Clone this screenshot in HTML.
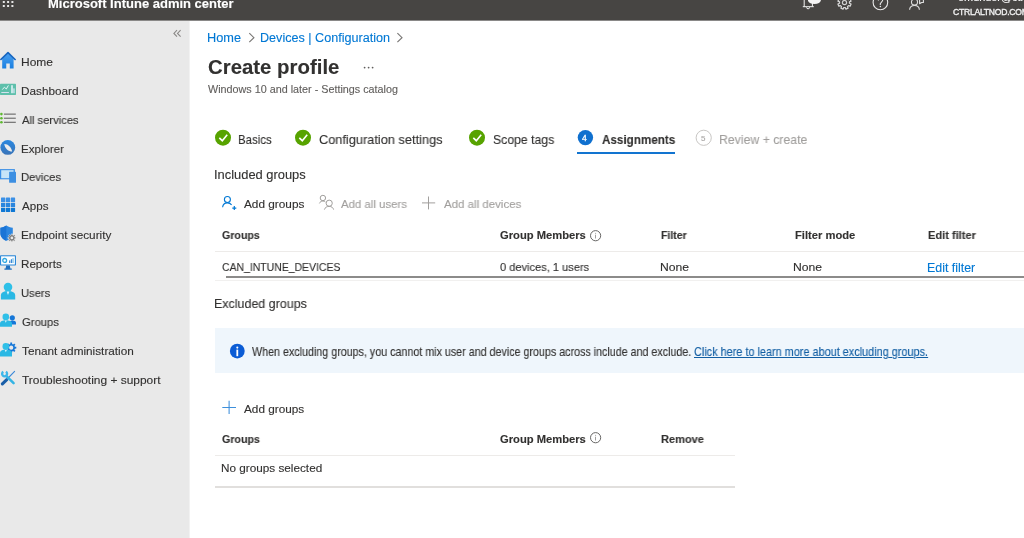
<!DOCTYPE html>
<html><head><meta charset="utf-8">
<style>
*{margin:0;padding:0;box-sizing:border-box}
html,body{width:1024px;height:538px;overflow:hidden;background:#fff;font-family:"Liberation Sans",sans-serif;color:#323130}
.a{position:absolute;white-space:nowrap;line-height:1;will-change:transform;-webkit-text-stroke:0.12px currentColor}
.i{position:absolute;overflow:visible}
</style></head><body>
<div style="position:absolute;left:0;top:0;width:1024px;height:20px;background:#474543"></div>
<svg class="i" style="left:0;top:0" width="20" height="20"><rect x="2.8" y="1.0" width="2" height="2" fill="#e6e6e6"/><rect x="2.8" y="5.0" width="2" height="2" fill="#e6e6e6"/><rect x="7.1" y="1.0" width="2" height="2" fill="#e6e6e6"/><rect x="7.1" y="5.0" width="2" height="2" fill="#e6e6e6"/><rect x="11.4" y="1.0" width="2" height="2" fill="#e6e6e6"/><rect x="11.4" y="5.0" width="2" height="2" fill="#e6e6e6"/></svg>
<div class="a" style="left:48px;top:-3.00px;font-size:13px;color:#ffffff;font-weight:bold;">Microsoft Intune admin center</div>
<svg class="i" style="left:798px;top:0" width="30" height="20">
<path d="M6.2 -2 V6.7 M4.8 6.7 H15.8 M14.4 -2 V6.7" stroke="#f2f2f2" stroke-width="1" fill="none"/>
<path d="M8.6 7.3 a1.5 1.5 0 0 0 3 0" stroke="#f2f2f2" stroke-width="1" fill="none"/>
<ellipse cx="16.4" cy="0.2" rx="6.4" ry="3.8" fill="#f4f4f4"/>
</svg>
<svg class="i" style="left:830px;top:-6px" width="30" height="20">
<path d="M21.04 10.06 L20.16 12.19 L18.50 11.60 L17.50 12.60 L18.09 14.26 L15.96 15.14 L15.20 13.55 L13.80 13.55 L13.04 15.14 L10.91 14.26 L11.50 12.60 L10.50 11.60 L8.84 12.19 L7.96 10.06 L9.55 9.30 L9.55 7.90 L7.96 7.14 L8.84 5.01 L10.50 5.60 L11.50 4.60 L10.91 2.94 L13.04 2.06 L13.80 3.65 L15.20 3.65 L15.96 2.06 L18.09 2.94 L17.50 4.60 L18.50 5.60 L20.16 5.01 L21.04 7.14 L19.45 7.90 L19.45 9.30Z" stroke="#d8d8d8" stroke-width="1.25" fill="none" stroke-linejoin="round"/>
<circle cx="14.5" cy="8.6" r="2.1" stroke="#d0d0d0" stroke-width="1.2" fill="none"/>
</svg>
<svg class="i" style="left:866px;top:0" width="30" height="20">
<circle cx="14.4" cy="2.45" r="7.3" stroke="#e8e8e8" stroke-width="1.1" fill="none"/>
<path d="M12.5 0.5 A2.1 2.1 0 1 1 16.3 1.0 L14.3 3.7 V5.0" stroke="#e4e4e4" stroke-width="1.1" fill="none"/>
<circle cx="14.4" cy="6.4" r="0.75" fill="#e8e8e8"/>
</svg>
<svg class="i" style="left:900px;top:0" width="30" height="20">
<circle cx="14.5" cy="2.1" r="3.05" stroke="#dcdcdc" stroke-width="1.1" fill="none"/>
<path d="M9.6 9.8 C9.8 6.8 11.8 5.5 14.5 5.5 C17.2 5.5 19.2 6.8 19.4 9.8" stroke="#dcdcdc" stroke-width="1.2" fill="none"/>
<path d="M19.6 -2 V3.8 L21.6 2.5 H23.4 V-2" stroke="#e0e0e0" stroke-width="1.1" fill="none" stroke-linejoin="round"/>
</svg>
<div class="a" style="left:958px;top:-8.00px;font-size:10.9px;color:#ffffff;">emunder@ctrlaltnod.com</div>
<div class="a" style="left:952.5px;top:8.00px;font-size:8.6px;color:#f0f0f0;letter-spacing:-0.25px;-webkit-text-stroke:0.35px #f0f0f0;">CTRLALTNOD.COM</div>
<div style="position:absolute;left:0;top:20px;width:189px;height:518px;background:#e9e9e9"></div>
<div style="position:absolute;left:189px;top:20px;width:1px;height:518px;background:#f2f2f2"></div>
<div style="position:absolute;left:0;top:20px;width:1024px;height:1px;background:#8a8988"></div>
<svg class="i" style="left:170px;top:27px" width="14" height="14">
<path d="M7 3.2 L3.9 6.4 L7 9.6 M10.6 3.2 L7.5 6.4 L10.6 9.6" stroke="#8a8886" stroke-width="1.1" fill="none"/>
</svg>
<div class="a" style="left:20.97px;top:56px;font-size:11.6px;color:#323130;transform:scaleX(1.0333);transform-origin:0 0;">Home</div>
<div class="a" style="left:20.99px;top:85px;font-size:11.6px;color:#323130;transform:scaleX(1.0145);transform-origin:0 0;">Dashboard</div>
<div class="a" style="left:22.00px;top:114px;font-size:11.6px;color:#323130;transform:scaleX(0.9655);transform-origin:0 0;">All services</div>
<div class="a" style="left:21.00px;top:143px;font-size:11.6px;color:#323130;transform:scaleX(0.9952);transform-origin:0 0;">Explorer</div>
<div class="a" style="left:21.03px;top:171px;font-size:11.6px;color:#323130;transform:scaleX(0.9700);transform-origin:0 0;">Devices</div>
<div class="a" style="left:22.00px;top:200px;font-size:11.6px;color:#323130;">Apps</div>
<div class="a" style="left:20.98px;top:229px;font-size:11.6px;color:#323130;transform:scaleX(1.0159);transform-origin:0 0;">Endpoint security</div>
<div class="a" style="left:21.00px;top:258px;font-size:11.6px;color:#323130;transform:scaleX(1.0026);transform-origin:0 0;">Reports</div>
<div class="a" style="left:21.03px;top:287px;font-size:11.6px;color:#323130;transform:scaleX(0.9655);transform-origin:0 0;">Users</div>
<div class="a" style="left:22.00px;top:316px;font-size:11.6px;color:#323130;transform:scaleX(0.9711);transform-origin:0 0;">Groups</div>
<div class="a" style="left:22.00px;top:345px;font-size:11.6px;color:#323130;transform:scaleX(1.0145);transform-origin:0 0;">Tenant administration</div>
<div class="a" style="left:22.00px;top:374px;font-size:11.6px;color:#323130;transform:scaleX(1.0289);transform-origin:0 0;">Troubleshooting + support</div>
<svg class="i" style="left:0;top:48px" width="18" height="24">
<defs><linearGradient id="hg" x1="0" y1="0" x2="0" y2="1"><stop offset="0" stop-color="#4aa0f0"/><stop offset="1" stop-color="#1a7fe0"/></linearGradient></defs>
<path d="M2.2 10.5 L8 5.2 L13.6 10.5 V20.5 H9.8 V15.6 H6.25 V20.5 H2.2Z" fill="url(#hg)"/>
<path d="M0.4 12 L8 4.6 L15.6 12" stroke="#1565c0" stroke-width="1.6" fill="none" stroke-linejoin="round"/>
</svg>
<svg class="i" style="left:0;top:80px" width="18" height="20">
<rect x="0" y="3.7" width="16" height="11.2" rx="0.6" fill="#5ec0ab"/>
<path d="M2.3 9.6 L4.4 7.2 L6.3 9 L8.4 5.4" stroke="#e4f6f8" stroke-width="1" fill="none"/>
<rect x="1.3" y="12" width="7.6" height="1" fill="#d5e2f0"/>
<rect x="11.2" y="5.2" width="1.6" height="8" fill="#e0f2f6"/>
<rect x="13.3" y="8.4" width="1.3" height="4.8" fill="#d6e6f4"/>
</svg>
<svg class="i" style="left:0;top:108px" width="18" height="20">
<rect x="3.9" y="5.5" width="11.9" height="1.3" fill="#7a7a7a"/>
<rect x="3.9" y="9.6" width="11.9" height="1.3" fill="#7a7a7a"/>
<rect x="3.9" y="13.7" width="11.9" height="1.3" fill="#7a7a7a"/>
<circle cx="1.4" cy="6.1" r="1.3" fill="#5cb82e"/><circle cx="1.4" cy="10.2" r="1.3" fill="#5cb82e"/><circle cx="1.4" cy="14.3" r="1.3" fill="#5cb82e"/>
</svg>
<svg class="i" style="left:0;top:137px" width="18" height="20">
<defs><linearGradient id="eg" x1="0" y1="0" x2="0" y2="1"><stop offset="0" stop-color="#2a88e0"/><stop offset="1" stop-color="#3a74b8"/></linearGradient></defs>
<circle cx="7.8" cy="10.4" r="7.4" fill="url(#eg)"/>
<path d="M4.3 6.9 C7.4 6.6 11.6 10 12.1 14.6 C8.6 14.6 4.6 11.2 4.3 6.9Z" fill="#ececec"/>
</svg>
<svg class="i" style="left:0;top:165px" width="18" height="20">
<rect x="0" y="4.1" width="14.9" height="10.2" fill="#3a8ee6"/>
<rect x="1.2" y="5.2" width="12.4" height="8" fill="#c7e4f8"/>
<rect x="9.1" y="6.7" width="6.9" height="11.1" rx="0.6" fill="#3d8fe2"/>
</svg>
<svg class="i" style="left:0;top:194px" width="18" height="20"><rect x="1.0" y="3.6" width="4.3" height="4.5" rx="0.4" fill="#3b90e6"/><rect x="1.0" y="8.7" width="4.3" height="4.4" rx="0.4" fill="#2a86de"/><rect x="1.0" y="13.7" width="4.3" height="4.3" rx="0.4" fill="#0f78d4"/><rect x="5.9" y="3.6" width="4.2" height="4.5" rx="0.4" fill="#3b90e6"/><rect x="5.9" y="8.7" width="4.2" height="4.4" rx="0.4" fill="#2a86de"/><rect x="5.9" y="13.7" width="4.2" height="4.3" rx="0.4" fill="#0f78d4"/><rect x="10.8" y="3.6" width="4.3" height="4.5" rx="0.4" fill="#3b90e6"/><rect x="10.8" y="8.7" width="4.3" height="4.4" rx="0.4" fill="#2a86de"/><rect x="10.8" y="13.7" width="4.3" height="4.3" rx="0.4" fill="#0f78d4"/></svg>
<svg class="i" style="left:0;top:223px" width="18" height="20">
<path d="M0.4 4.8 C2.6 4.8 4.6 3.8 6.3 2.6 C8 3.8 10.4 4.8 12.8 4.8 V10.2 C12.8 13.6 10.2 16.2 6.3 17.8 C2.8 16.4 0.4 13.8 0.4 10.2Z" fill="#2c86e0"/>
<path d="M6.3 2.6 V17.8 C2.8 16.4 0.4 13.8 0.4 10.2 V4.8 C2.6 4.8 4.6 3.8 6.3 2.6Z" fill="#1a74d6"/>
<path d="M15.84 14.21 L15.84 15.59 L14.71 15.62 L14.40 16.38 L15.17 17.20 L14.20 18.17 L13.38 17.40 L12.62 17.71 L12.59 18.84 L11.21 18.84 L11.18 17.71 L10.42 17.40 L9.60 18.17 L8.63 17.20 L9.40 16.38 L9.09 15.62 L7.96 15.59 L7.96 14.21 L9.09 14.18 L9.40 13.42 L8.63 12.60 L9.60 11.63 L10.42 12.40 L11.18 12.09 L11.21 10.96 L12.59 10.96 L12.62 12.09 L13.38 12.40 L14.20 11.63 L15.17 12.60 L14.40 13.42 L14.71 14.18Z" fill="#7a7a7a" stroke="#e9e9e9" stroke-width="0.6"/>
<circle cx="11.9" cy="14.9" r="1.4" fill="#e9e9e9"/>
</svg>
<svg class="i" style="left:0;top:252px" width="18" height="20">
<rect x="0" y="3.2" width="16" height="10.4" rx="0.8" fill="#2b88d8"/>
<rect x="1.1" y="4.3" width="13.8" height="8.2" fill="#fbfdff"/>
<circle cx="4.7" cy="8.4" r="1.9" stroke="#30a8e0" stroke-width="1.3" fill="none"/>
<rect x="9.2" y="8.4" width="1.1" height="2.6" fill="#2b78c8"/><rect x="10.9" y="7.2" width="1.1" height="3.8" fill="#3a88d8"/><rect x="12.5" y="6.2" width="1" height="4.8" fill="#58b0e0"/>
<path d="M6.2 13.6 H9.8 L10.4 16.6 H11.8 V17.8 H4.4 V16.6 H5.6Z" fill="#1f6fbf"/>
</svg>
<svg class="i" style="left:0;top:281px" width="18" height="20">
<circle cx="8" cy="6.1" r="4.3" fill="#2ec0e8"/>
<path d="M0.9 18.6 V14.6 C0.9 11.6 3.6 10 8 10 C12.4 10 15.2 11.6 15.2 14.6 V18.6Z" fill="#2ab8e4"/>
<path d="M6.6 10.6 L8 14 L9.4 10.6Z" fill="#d8f4fc"/>
</svg>
<svg class="i" style="left:0;top:310px" width="18" height="20">
<circle cx="12.3" cy="7.8" r="2.6" fill="#1677d8"/>
<path d="M9.2 14.6 V12.8 C9.2 11.2 10.6 10.4 12.4 10.4 C14.4 10.4 16 11.2 16 12.8 V14.6Z" fill="#1677d8"/>
<circle cx="5.8" cy="6.9" r="3.3" fill="#30c0e8"/>
<path d="M0 16.7 V13.4 C0 11.2 2.6 10.2 5.8 10.2 C9.2 10.2 12 11.2 12 13.4 V16.7Z" fill="#2ab8e4"/>
<path d="M4.8 10.6 L5.8 12.8 L6.8 10.6Z" fill="#d8f4fc"/>
</svg>
<svg class="i" style="left:0;top:339px" width="18" height="20">
<path d="M16.32 7.81 L16.32 9.59 L14.88 9.65 L14.47 10.63 L15.45 11.69 L14.19 12.95 L13.13 11.97 L12.15 12.38 L12.09 13.82 L10.31 13.82 L10.25 12.38 L9.27 11.97 L8.21 12.95 L6.95 11.69 L7.93 10.63 L7.52 9.65 L6.08 9.59 L6.08 7.81 L7.52 7.75 L7.93 6.77 L6.95 5.71 L8.21 4.45 L9.27 5.43 L10.25 5.02 L10.31 3.58 L12.09 3.58 L12.15 5.02 L13.13 5.43 L14.19 4.45 L15.45 5.71 L14.47 6.77 L14.88 7.75Z" fill="#1677d8"/>
<circle cx="11.2" cy="8.7" r="2.1" fill="#e9e9e9"/>
<circle cx="5.8" cy="7.4" r="3.3" fill="#30c0e8"/>
<path d="M0 17.5 V14 C0 11.8 2.6 10.6 5.8 10.6 C9.2 10.6 12 11.8 12 14 V17.5Z" fill="#2ab8e4"/>
<path d="M4.8 11 L5.8 13.2 L6.8 11Z" fill="#d8f4fc"/>
</svg>
<svg class="i" style="left:0;top:368px" width="18" height="20">
<path d="M2.4 15.8 L6.8 11.6" stroke="#1a5fa8" stroke-width="3.2" stroke-linecap="round"/>
<path d="M7.2 11 L14.6 3.4" stroke="#3a88d8" stroke-width="1.1" stroke-linecap="round"/>
<path d="M6.2 7.8 L13.6 15.2" stroke="#34b4e4" stroke-width="2.5" stroke-linecap="round"/>
<path d="M5.9 3.7 A2.5 2.5 0 1 1 3.3 3.7" stroke="#3cb6ea" stroke-width="2.3" fill="none"/>
</svg>
<div class="a" style="left:206.76px;top:32px;font-size:12.3px;color:#0078d4;transform:scaleX(1.0375);transform-origin:0 0;">Home</div>
<svg class="i" style="left:246px;top:32px" width="12" height="12"><path d="M3.3 1.2 L7.9 5.7 L3.3 10.2" stroke="#7a7876" stroke-width="1.15" fill="none"/></svg>
<div class="a" style="left:260.48px;top:32px;font-size:12.3px;color:#0078d4;transform:scaleX(1.0240);transform-origin:0 0;">Devices | Configuration</div>
<svg class="i" style="left:394px;top:32px" width="12" height="12"><path d="M3.4 1.2 L8.0 5.7 L3.4 10.2" stroke="#7a7876" stroke-width="1.15" fill="none"/></svg>
<div class="a" style="left:208.20px;top:58px;font-size:19.4px;color:#323130;font-weight:bold;transform:scaleX(1.0512);transform-origin:0 0;">Create profile</div>
<svg class="i" style="left:360px;top:62px" width="18" height="10"><circle cx="4.6" cy="5.6" r="0.9" fill="#605e5c"/><circle cx="8.6" cy="5.6" r="0.9" fill="#605e5c"/><circle cx="12.6" cy="5.6" r="0.9" fill="#605e5c"/></svg>
<div class="a" style="left:208.00px;top:84px;font-size:10.6px;color:#605e5c;transform:scaleX(1.0177);transform-origin:0 0;">Windows 10 and later - Settings catalog</div>
<svg class="i" style="left:212.7px;top:128px" width="20" height="20"><circle cx="10" cy="9.7" r="8" fill="#57a300"/><path d="M6.3 9.8 L9.3 12.7 L14.2 6.7" stroke="#fff" stroke-width="1.6" fill="none"/></svg>
<div class="a" style="left:238.33px;top:133px;font-size:13.2px;color:#323130;transform:scaleX(0.8658);transform-origin:0 0;">Basics</div>
<svg class="i" style="left:293.1px;top:128px" width="20" height="20"><circle cx="10" cy="9.7" r="8" fill="#57a300"/><path d="M6.3 9.8 L9.3 12.7 L14.2 6.7" stroke="#fff" stroke-width="1.6" fill="none"/></svg>
<div class="a" style="left:319.30px;top:133px;font-size:13.2px;color:#323130;transform:scaleX(0.9685);transform-origin:0 0;">Configuration settings</div>
<svg class="i" style="left:467.2px;top:128px" width="20" height="20"><circle cx="10" cy="9.7" r="8" fill="#57a300"/><path d="M6.3 9.8 L9.3 12.7 L14.2 6.7" stroke="#fff" stroke-width="1.6" fill="none"/></svg>
<div class="a" style="left:492.67px;top:133px;font-size:13.2px;color:#323130;transform:scaleX(0.9277);transform-origin:0 0;">Scope tags</div>
<svg class="i" style="left:575px;top:128px" width="20" height="20"><circle cx="10.4" cy="9.6" r="7.7" fill="#0f70cf"/></svg>
<div class="a" style="left:582.4px;top:134.00px;font-size:8.5px;color:#ffffff;-webkit-text-stroke:0.3px #fff;">4</div>
<div class="a" style="left:601.60px;top:133px;font-size:13.2px;color:#323130;font-weight:bold;transform:scaleX(0.8843);transform-origin:0 0;">Assignments</div>
<div style="position:absolute;left:577px;top:152.3px;width:98px;height:2px;background:#1274d0"></div>
<svg class="i" style="left:694px;top:128px" width="20" height="20"><circle cx="9.7" cy="9.8" r="7.6" stroke="#c8c6c4" stroke-width="1" fill="none"/></svg>
<div class="a" style="left:701.3px;top:135.00px;font-size:8px;color:#a8a6a4;">5</div>
<div class="a" style="left:719.07px;top:133px;font-size:13.2px;color:#a19f9d;transform:scaleX(0.9309);transform-origin:0 0;">Review + create</div>
<div class="a" style="left:214.30px;top:169px;font-size:12.9px;color:#323130;transform:scaleX(0.9956);transform-origin:0 0;">Included groups</div>
<svg class="i" style="left:216px;top:190px" width="28" height="24">
<circle cx="11.4" cy="9.45" r="3.0" stroke="#0078d4" stroke-width="1.1" fill="none"/>
<path d="M6.6 17.2 C6.9 14.5 8.9 12.9 11.4 12.9 C13.2 12.9 14.6 13.6 15.6 14.9" stroke="#0078d4" stroke-width="1.1" fill="none"/>
<path d="M18.3 16.1 V20.1 M16.3 18.1 H20.3" stroke="#0078d4" stroke-width="1.2" fill="none"/>
</svg>
<div class="a" style="left:243.70px;top:198px;font-size:11.7px;color:#323130;transform:scaleX(1.0100);transform-origin:0 0;">Add groups</div>
<svg class="i" style="left:314px;top:190px" width="28" height="24">
<circle cx="8.9" cy="8" r="2.7" stroke="#a19f9d" stroke-width="1" fill="none"/>
<path d="M5.4 13.4 C6 11.8 7.4 11 8.9 11 C10 11 10.8 11.4 11.4 12" stroke="#a19f9d" stroke-width="1" fill="none"/>
<circle cx="15.2" cy="13.2" r="3.1" stroke="#a19f9d" stroke-width="1" fill="none"/>
<path d="M10.4 19.6 C11 17.4 12.8 16.4 15.2 16.4 C17.4 16.4 19 17.4 19.6 19.6" stroke="#a19f9d" stroke-width="1" fill="none"/>
</svg>
<div class="a" style="left:341.00px;top:198px;font-size:11.7px;color:#a19f9d;transform:scaleX(0.9761);transform-origin:0 0;">Add all users</div>
<svg class="i" style="left:416px;top:190px" width="28" height="24"><path d="M12.5 6.5 V19.4 M6 12.9 H19.2" stroke="#a19f9d" stroke-width="1" fill="none"/></svg>
<div class="a" style="left:443.50px;top:198px;font-size:11.7px;color:#a19f9d;transform:scaleX(0.9833);transform-origin:0 0;">Add all devices</div>
<div class="a" style="left:222.00px;top:230px;font-size:11.2px;color:#323130;font-weight:bold;transform:scaleX(0.9500);transform-origin:0 0;">Groups</div>
<div class="a" style="left:500.00px;top:230px;font-size:11.2px;color:#323130;font-weight:bold;">Group Members</div>
<svg class="i" style="left:589.5px;top:229.5px" width="12" height="12"><circle cx="5.6" cy="5.7" r="5.1" stroke="#5f5e5d" stroke-width="0.95" fill="none"/><rect x="5.2" y="4.7" width="0.8" height="3.8" fill="#8a8988"/><circle cx="5.6" cy="3.3" r="0.5" fill="#8a8988"/></svg>
<div class="a" style="left:660.60px;top:230px;font-size:11.2px;color:#323130;font-weight:bold;transform:scaleX(0.9393);transform-origin:0 0;">Filter</div>
<div class="a" style="left:794.50px;top:230px;font-size:11.2px;color:#323130;font-weight:bold;">Filter mode</div>
<div class="a" style="left:928.00px;top:230px;font-size:11.2px;color:#323130;font-weight:bold;transform:scaleX(0.9857);transform-origin:0 0;">Edit filter</div>
<div style="position:absolute;left:215px;top:251px;width:809px;height:1px;background:#edebe9"></div>
<div class="a" style="left:222.10px;top:261px;font-size:11.7px;color:#323130;transform:scaleX(0.8932);transform-origin:0 0;">CAN_INTUNE_DEVICES</div>
<div class="a" style="left:500.00px;top:261px;font-size:11.7px;color:#323130;transform:scaleX(0.9468);transform-origin:0 0;">0 devices, 1 users</div>
<div class="a" style="left:659.56px;top:261px;font-size:11.7px;color:#323130;transform:scaleX(1.0407);transform-origin:0 0;">None</div>
<div class="a" style="left:793.46px;top:261px;font-size:11.7px;color:#323130;transform:scaleX(1.0407);transform-origin:0 0;">None</div>
<div class="a" style="left:926.98px;top:262px;font-size:12.2px;color:#0078d4;transform:scaleX(1.0174);transform-origin:0 0;">Edit filter</div>
<div style="position:absolute;left:225.6px;top:276.2px;width:799px;height:1.8px;background:#8c8b8a"></div>
<div style="position:absolute;left:215px;top:280px;width:809px;height:1px;background:#f1f0ef"></div>
<div class="a" style="left:214.23px;top:298px;font-size:12.9px;color:#323130;transform:scaleX(0.9674);transform-origin:0 0;">Excluded groups</div>
<div style="position:absolute;left:214.6px;top:328px;width:810px;height:45.3px;background:#eff6fc"></div>
<svg class="i" style="left:228px;top:342px" width="18" height="18"><circle cx="9.3" cy="9.1" r="7.4" fill="#0b5cd5"/><rect x="8.4" y="7.6" width="1.8" height="6.6" fill="#fff"/><circle cx="9.3" cy="5.6" r="1.05" fill="#fff"/></svg>
<div class="a" style="left:252.00px;top:346px;font-size:12.1px;color:#323130;transform:scaleX(0.8855);transform-origin:0 0;">When excluding groups, you cannot mix user and device groups across include and exclude.</div>
<div class="a" style="left:694.00px;top:346px;font-size:12.1px;color:#115ea3;transform:scaleX(0.8996);transform-origin:0 0;"><span style="text-decoration:underline">Click here to learn more about excluding groups.</span></div>
<svg class="i" style="left:216px;top:396px" width="24" height="24"><path d="M13.1 4.7 V18.1 M6.3 11.4 H20" stroke="#3d8fdb" stroke-width="1.05" fill="none"/></svg>
<div class="a" style="left:243.60px;top:403px;font-size:11.7px;color:#323130;transform:scaleX(1.0067);transform-origin:0 0;">Add groups</div>
<div class="a" style="left:222.00px;top:434px;font-size:11.2px;color:#323130;font-weight:bold;transform:scaleX(0.9525);transform-origin:0 0;">Groups</div>
<div class="a" style="left:500.00px;top:434px;font-size:11.2px;color:#323130;font-weight:bold;">Group Members</div>
<svg class="i" style="left:589.5px;top:432.3px" width="12" height="12"><circle cx="5.6" cy="5.7" r="5.1" stroke="#5f5e5d" stroke-width="0.95" fill="none"/><rect x="5.2" y="4.7" width="0.8" height="3.8" fill="#8a8988"/><circle cx="5.6" cy="3.3" r="0.5" fill="#8a8988"/></svg>
<div class="a" style="left:660.50px;top:434px;font-size:11.2px;color:#323130;font-weight:bold;transform:scaleX(0.9860);transform-origin:0 0;">Remove</div>
<div style="position:absolute;left:215px;top:455px;width:520px;height:1px;background:#edebe9"></div>
<div class="a" style="left:220.99px;top:462px;font-size:11.6px;color:#323130;transform:scaleX(1.0131);transform-origin:0 0;">No groups selected</div>
<div style="position:absolute;left:215px;top:486px;width:520px;height:1.5px;background:#e1dfdd"></div>
</body></html>
